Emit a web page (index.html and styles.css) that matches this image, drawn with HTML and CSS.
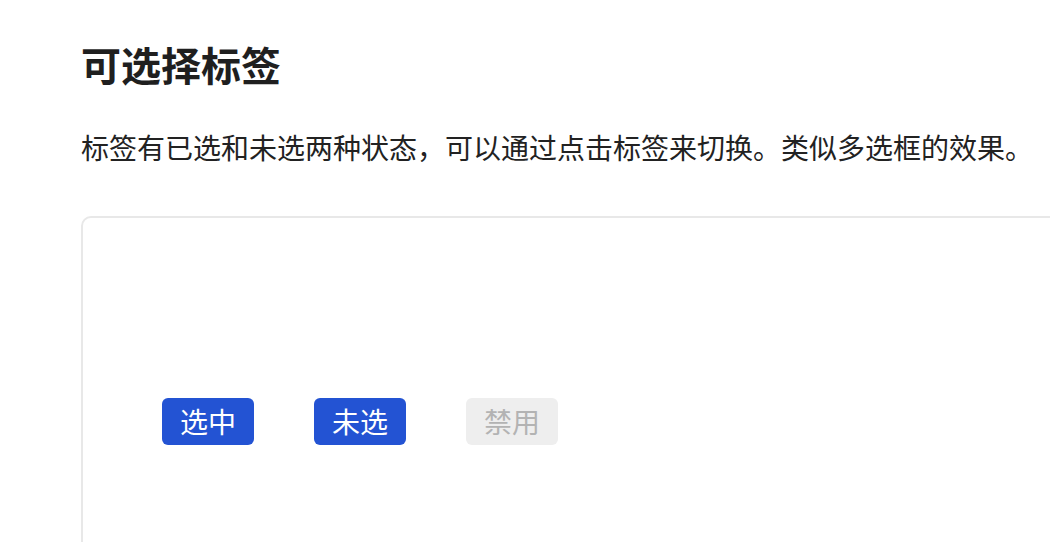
FILE: index.html
```html
<!DOCTYPE html>
<html lang="zh-CN">
<head>
<meta charset="utf-8">
<title>可选择标签</title>
<link rel="stylesheet" href="styles.css">
</head>
<body>
<main class="page">
  <h1 class="title">可选择标签</h1>
  <p class="desc">标签有已选和未选两种状态，可以通过点击标签来切换。类似多选框的效果。</p>
  <section class="demo">
    <div class="tags">
      <span class="tag tag-checked">选中</span>
      <span class="tag tag-checked">未选</span>
      <span class="tag tag-disabled">禁用</span>
    </div>
  </section>
</main>
</body>
</html>
```
FILE: styles.css
```css
html, body {
  margin: 0;
  padding: 0;
  background: #ffffff;
  overflow: hidden;
}
body {
  font-family: "Noto Sans CJK SC", "Noto Sans", sans-serif;
  color: #1f1f1f;
}
.page {
  box-sizing: border-box;
  padding-left: 81px;
  width: 100vw;
  height: 100vh;
  overflow: hidden;
}
.title {
  margin: 0;
  padding-top: 36px;
  font-size: 40px;
  line-height: 56px;
  font-weight: 700;
  color: #1f1f1f;
}
.desc {
  margin: 35px 0 0;
  font-size: 28px;
  line-height: 40px;
  color: #222222;
}
.demo {
  margin-top: 49px;
  width: 1100px;
  height: 420px;
  box-sizing: border-box;
  border: 2px solid #e8e8e8;
  border-radius: 10px;
  padding: 180px 0 0 79px;
}
.tags {
  display: flex;
  gap: 60px;
}
.tag {
  display: inline-block;
  height: 47px;
  line-height: 47px;
  padding: 0 18px;
  font-size: 28px;
  border-radius: 6px;
}
.tag-checked {
  background: #2353d3;
  color: #ffffff;
}
.tag-disabled {
  background: #eeeeee;
  color: #b3b3b3;
}
```
